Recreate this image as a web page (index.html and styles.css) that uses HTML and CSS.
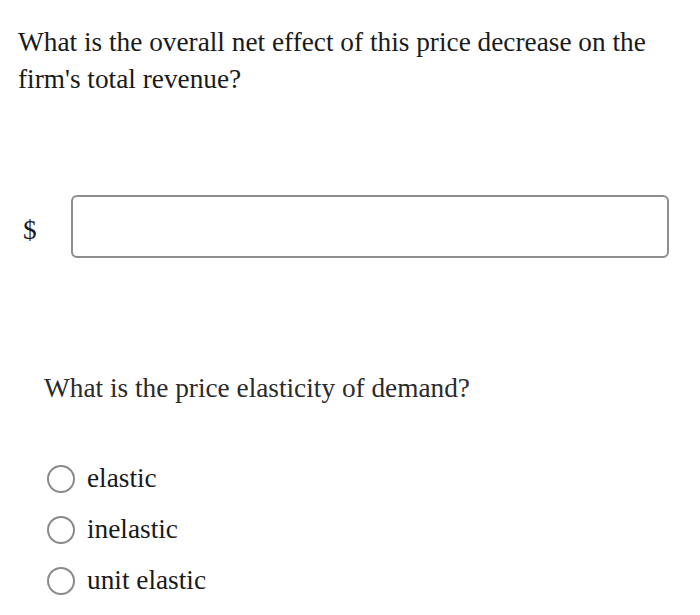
FILE: index.html
```html
<!DOCTYPE html>
<html lang="en">
<head>
<meta charset="utf-8">
<title>Question</title>
<link rel="stylesheet" href="styles.css">
</head>
<body>
<main class="page">
  <p class="question">What is the overall net effect of this price decrease on the firm's total revenue?</p>
  <div class="answer-row">
    <span class="currency">$</span>
    <input class="amount" type="text" aria-label="Net effect on total revenue">
  </div>
  <section class="choice-block">
    <p class="question question--sub">What is the price elasticity of demand?</p>
    <div class="options">
      <label class="option"><input class="radio" type="radio" name="elasticity"><span class="option-text">elastic</span></label>
      <label class="option"><input class="radio" type="radio" name="elasticity"><span class="option-text">inelastic</span></label>
      <label class="option"><input class="radio" type="radio" name="elasticity"><span class="option-text">unit elastic</span></label>
    </div>
  </section>
</main>
</body>
</html>
```

FILE: styles.css
```css
html, body {
  margin: 0;
  padding: 0;
  background: #ffffff;
}

body {
  font-family: "Liberation Serif", "Times New Roman", serif;
  font-size: 27.3px;
  color: #1a1a1a;
}

.page {
  padding: 24px 30px 0 18px;
}

.question {
  margin: 0;
  line-height: 37px;
  max-width: 650px;
}

.answer-row {
  display: flex;
  align-items: center;
  margin-top: 97px;
  padding-left: 5px;
  gap: 34px;
}

.currency {
  line-height: 37px;
  padding-top: 8px;
}

.amount {
  box-sizing: border-box;
  width: 598px;
  height: 63px;
  border: 2px solid #8e8e8e;
  border-radius: 6px;
  background: #fff;
  outline: none;
  font: inherit;
}

.choice-block {
  margin-top: 112px;
  padding-left: 26px;
}

.question--sub {
  color: #2b2b2b;
}

.options {
  display: flex;
  flex-direction: column;
  gap: 14px;
  margin-top: 53px;
}

.option {
  display: flex;
  align-items: center;
  gap: 12px;
  line-height: 37px;
}

.radio {
  appearance: none;
  -webkit-appearance: none;
  box-sizing: border-box;
  width: 28px;
  height: 28px;
  margin: 0 0 0 3px;
  border: 2.5px solid #8a8a8a;
  border-radius: 50%;
  background: #fff;
  flex: none;
}

.option-text {
  color: #1a1a1a;
}
```
